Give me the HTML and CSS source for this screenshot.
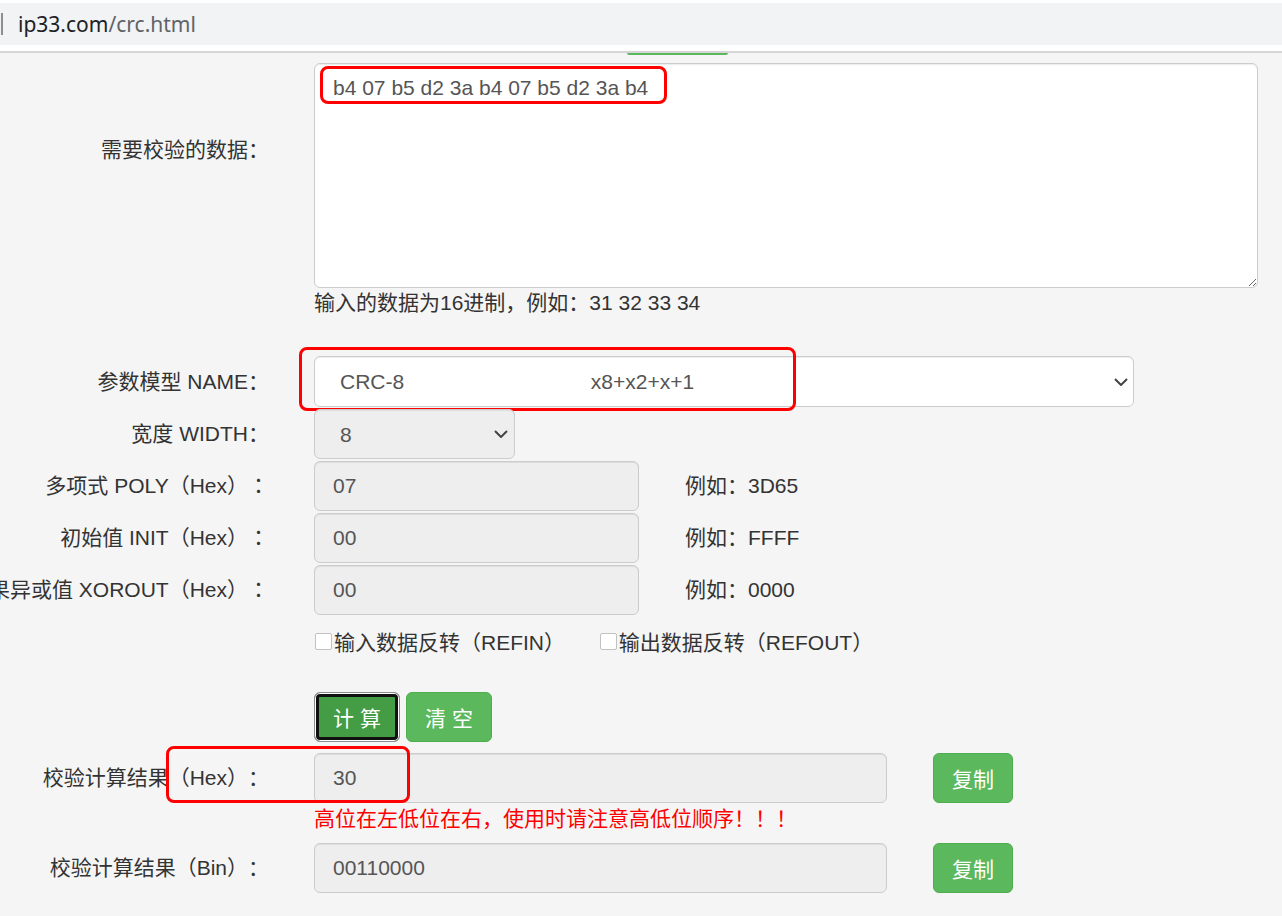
FILE: index.html
```html
<!DOCTYPE html>
<html lang="zh-CN">
<head>
  <meta charset="UTF-8">
  <title>CRC（循环冗余校验）在线计算</title>
  <link rel="stylesheet" href="styles.css">
</head>
<body>

<div id="browserBar">
  <div class="url-bar"><span class="url-sep"></span><span class="url-host">ip33.com</span><span class="url-path">/crc.html</span></div>
</div>

<div id="page">
  <div class="prev-button"></div>

  <form id="crcForm">
    <div class="form-row row-data">
      <label class="form-label" for="dataInput">需要校验的数据：</label>
      <div class="form-field">
        <div class="mark-holder">
          <textarea id="dataInput" class="form-control data-input">b4 07 b5 d2 3a b4 07 b5 d2 3a b4</textarea>
          <span class="red-mark mark-data"></span>
        </div>
        <div class="help-text">输入的数据为16进制，例如：31 32 33 34</div>
      </div>
    </div>

    <div class="form-row row-name">
      <label class="form-label" for="modelName">参数模型 NAME：</label>
      <div class="form-field">
        <div class="select-wrap select-name">
          <select id="modelName" class="form-control">
            <option>CRC-8&nbsp;&nbsp;&nbsp;&nbsp;&nbsp;&nbsp;&nbsp;&nbsp;&nbsp;&nbsp;&nbsp;&nbsp;&nbsp;&nbsp;&nbsp;&nbsp;&nbsp;&nbsp;&nbsp;&nbsp;&nbsp;&nbsp;&nbsp;&nbsp;&nbsp;&nbsp;&nbsp;&nbsp;&nbsp;&nbsp;&nbsp;&nbsp;x8+x2+x+1</option>
          </select>
          <svg class="caret" width="14" height="8" viewBox="0 0 14 8"><polyline points="1,1 7,7 13,1" fill="none" stroke="#444" stroke-width="2"/></svg>
        </div>
      </div>
      <span class="red-mark mark-name"></span>
    </div>

    <div class="form-row">
      <label class="form-label" for="width">宽度 WIDTH：</label>
      <div class="form-field">
        <div class="select-wrap select-width">
          <select id="width" class="form-control readonly">
            <option>8</option>
          </select>
          <svg class="caret" width="14" height="8" viewBox="0 0 14 8"><polyline points="1,1 7,7 13,1" fill="none" stroke="#444" stroke-width="2"/></svg>
        </div>
      </div>
    </div>

    <div class="form-row">
      <label class="form-label" for="poly">多项式 POLY（Hex）：</label>
      <div class="form-field inline-field">
        <input id="poly" class="form-control readonly short-input" value="07">
        <span class="example">例如：3D65</span>
      </div>
    </div>

    <div class="form-row">
      <label class="form-label" for="init">初始值 INIT（Hex）：</label>
      <div class="form-field inline-field">
        <input id="init" class="form-control readonly short-input" value="00">
        <span class="example">例如：FFFF</span>
      </div>
    </div>

    <div class="form-row">
      <label class="form-label" for="xorout">结果异或值 XOROUT（Hex）：</label>
      <div class="form-field inline-field">
        <input id="xorout" class="form-control readonly short-input" value="00">
        <span class="example">例如：0000</span>
      </div>
    </div>

    <div class="form-row row-check">
      <div class="form-label empty"></div>
      <div class="form-field">
        <label class="check"><input type="checkbox">输入数据反转（REFIN）</label>
        <label class="check check-out"><input type="checkbox">输出数据反转（REFOUT）</label>
      </div>
    </div>

    <div class="form-row row-buttons">
      <div class="form-label empty"></div>
      <div class="form-field inline-field">
        <button type="button" class="btn btn-calc">计 算</button>
        <button type="button" class="btn btn-clear">清 空</button>
      </div>
    </div>

    <div class="form-row row-hex">
      <label class="form-label" for="resultHex">校验计算结果（Hex）：</label>
      <div class="form-field">
        <div class="inline-field">
          <input id="resultHex" class="form-control readonly result-input" value="30">
          <button type="button" class="btn btn-copy">复制</button>
        </div>
        <div class="warning">高位在左低位在右，使用时请注意高低位顺序！！！</div>
      </div>
      <span class="red-mark mark-hex"></span>
    </div>

    <div class="form-row row-bin">
      <label class="form-label" for="resultBin">校验计算结果（Bin）：</label>
      <div class="form-field inline-field">
        <input id="resultBin" class="form-control readonly result-input" value="00110000">
        <button type="button" class="btn btn-copy">复制</button>
      </div>
    </div>
  </form>
</div>

</body>
</html>
```

FILE: styles.css
```css
body {
  margin: 0; background-color: #f5f5f5; color: #333;
  font-family: "Liberation Sans", "Noto Sans CJK SC", sans-serif; font-size: 21px; line-height: 30px;
  text-spacing-trim: space-all;
}

/* browser address strip */
#browserBar { background-color: #fff; padding: 3px 0 6px; border-bottom: 2px solid #d6d6d6; }
.url-bar { height: 42px; background-color: #f1f3f4; display: flex; align-items: center; font-family: "Noto Sans", "Open Sans", sans-serif; font-size: 21px; }
.url-sep { width: 2px; height: 22px; background-color: #8e8e8e; margin: 0 15px 0 1px; }
.url-host { color: #202124; }
.url-path { color: #5f6368; }

#page { overflow: hidden; }
.prev-button { margin-left: 627px; width: 101px; height: 2px; background-color: #5cb85c; border-radius: 0 0 3px 3px; }
#crcForm { padding-top: 8px; }

.form-row { display: flex; align-items: flex-start; position: relative; }
.form-label {
  width: 269px; height: 50px; flex-shrink: 0;
  display: flex; align-items: center; justify-content: flex-end; white-space: nowrap;
  font-family: "Liberation Sans", "Noto Sans CJK TC", sans-serif;
}
.form-field { margin-left: 45px; }
.inline-field { display: flex; align-items: center; }

.form-control {
  box-sizing: border-box; height: 50px; padding: 0 18px;
  font-family: inherit; font-size: 21px; color: #555;
  background-color: #fff; border: 1px solid #ccc; border-radius: 6px;
  box-shadow: inset 0 1px 1px rgba(0,0,0,.075); outline: none;
}
.form-control.readonly { background-color: #eee; }

.row-data .form-label { height: auto; padding-top: 72px; }
.mark-holder { position: relative; }
.data-input { display: block; width: 944px; height: 225px; padding: 9px 18px; line-height: 30px; resize: both; }
.help-text { color: #333; }

.select-wrap { position: relative; }
.select-wrap select { -webkit-appearance: none; appearance: none; padding-left: 25px; display: block; }
.select-name select { width: 820px; height: 51px; }
.select-width select { width: 201px; }
.caret { position: absolute; top: 50%; margin-top: -4px; pointer-events: none; }
.select-name .caret { right: 6px; }
.select-width .caret { right: 7px; }

.form-row + .form-row { margin-top: 2px; }
.form-row.row-name { margin-top: 38px; }
.row-name .form-label { height: 51px; }
.short-input { width: 325px; }
.example { margin-left: 46px; font-family: "Liberation Sans", "Noto Sans CJK TC", sans-serif; }

.form-row.row-check { margin-top: 13px; }
.row-check .form-label { height: 30px; }
.check { display: inline-flex; align-items: center; font-family: "Liberation Sans", "Noto Sans CJK TC", sans-serif; }
.check input {
  -webkit-appearance: none; appearance: none; box-sizing: border-box; flex-shrink: 0;
  width: 17px; height: 17px; margin: -3px 2px 0 1px;
  background-color: #fff; border: 1px solid #c2c2c2; border-radius: 2px;
}
.check-out { margin-left: 28px; }

.form-row.row-buttons { margin-top: 34px; }
.btn {
  box-sizing: border-box; height: 50px; padding: 0; cursor: pointer;
  font-family: inherit; font-size: 21px; color: #fff;
  background-color: #5cb85c; border: 1px solid #4cae4c; border-radius: 6px;
}
.btn-calc { width: 86px; background-color: #449d44; border: 1px solid #8c8c8c; box-shadow: inset 0 0 0 1px #fff, inset 0 0 0 4px #111; }
.btn-clear { width: 86px; margin-left: 6px; }
.btn-copy { width: 80px; margin-left: 46px; }

.form-row.row-hex { margin-top: 11px; }
.result-input { width: 573px; }
.warning { color: #f00; margin-top: 1px; }
.form-row.row-bin { margin-top: 9px; }

/* red hand-drawn highlight boxes */
.red-mark { position: absolute; box-sizing: border-box; border: 3px solid #f00; border-radius: 8px; pointer-events: none; }
.mark-data { left: 6px; top: 3px; width: 347px; height: 38px; }
.mark-name { left: 299px; top: -9px; width: 497px; height: 64px; }
.mark-hex { left: 166px; top: -7px; width: 244px; height: 57px; }
```
